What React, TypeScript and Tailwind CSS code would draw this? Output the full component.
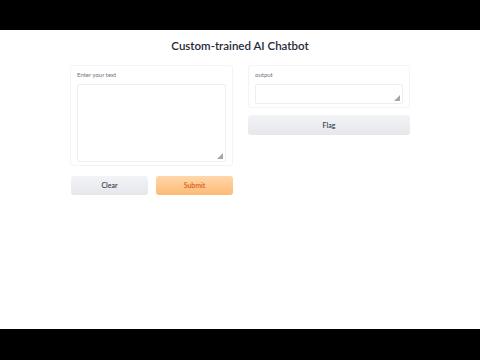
import React from "react";

const Grip = () => (
  <svg width="6" height="6" viewBox="0 0 6 6" className="absolute bottom-[2px] right-[2px]">
    <path d="M6 0 L6 6 L0 6 Z" fill="#a3a8b0" />
  </svg>
);

export default function App() {
  return (
    <div className="w-[480px] h-[360px] bg-black flex flex-col font-['Lato',sans-serif]">
      <div className="h-[30px]" />
      <div className="h-[299px] bg-white flex flex-col">
        <h1 className="text-center text-[11.5px] font-semibold text-[#1f2937] mt-[8px] leading-[16px]">
          Custom-trained AI Chatbot
        </h1>
        <div className="flex gap-[15px] mt-[11px] pl-[70px]">
          {/* left column */}
          <div className="w-[163px] flex flex-col">
            <div className="border border-[#f3f4f6] rounded-[3px] px-[6px] pt-[5px] pb-[3px]">
              <div className="text-[6px] text-[#6b7280] leading-[8px] mb-[5px]">Enter your text</div>
              <div className="relative h-[78px] border border-[#eceef1] rounded-[2px] bg-white">
                <Grip />
              </div>
            </div>
            <div className="flex gap-[8px] mt-[10px] pl-[1px]">
              <button className="w-[77px] h-[19px] rounded-[3px] bg-gradient-to-b from-[#f3f4f6] to-[#e5e7eb] text-[7px] font-semibold text-[#374151]">
                Clear
              </button>
              <button className="w-[77px] h-[19px] rounded-[3px] bg-gradient-to-b from-[#fed7aa] to-[#fdba74] text-[7px] font-semibold text-[#dd5a14]">
                Submit
              </button>
            </div>
          </div>
          {/* right column */}
          <div className="w-[162px] flex flex-col">
            <div className="border border-[#f3f4f6] rounded-[3px] px-[6px] pt-[5px] pb-[3px]">
              <div className="text-[6px] text-[#6b7280] leading-[8px] mb-[5px]">output</div>
              <div className="relative h-[20px] border border-[#eceef1] rounded-[2px] bg-white">
                <Grip />
              </div>
            </div>
            <button className="mt-[7px] w-full h-[20px] rounded-[3px] bg-gradient-to-b from-[#f3f4f6] to-[#e5e7eb] text-[7px] font-semibold text-[#374151]">
              Flag
            </button>
          </div>
        </div>
      </div>
      <div className="flex-1" />
    </div>
  );
}
